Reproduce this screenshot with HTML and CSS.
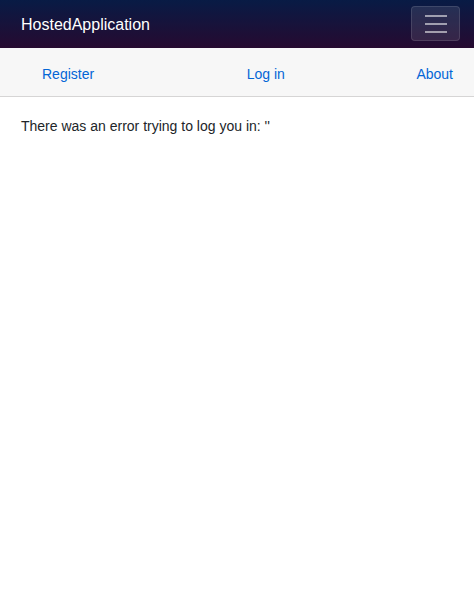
FILE: index.html
```html
<!DOCTYPE html>
<html lang="en">

<head>
    <meta charset="UTF-8">
    <meta name="viewport" content="width=device-width, initial-scale=1.0">
    <title>HostedApplication</title>
    <link rel="stylesheet" href="styles.css">
</head>

<body>
    <div class="top-bar">
        <a class="brand" href="#">HostedApplication</a>
        <button class="toggler" type="button" aria-label="Toggle navigation">
            <span class="bar"></span>
            <span class="bar"></span>
            <span class="bar"></span>
        </button>
    </div>
    <div class="top-row">
        <a class="nav-link" href="#">Register</a>
        <a class="nav-link login" href="#">Log in</a>
        <a class="nav-link" href="#">About</a>
    </div>
    <div class="content">
        There was an error trying to log you in: ''
    </div>
</body>

</html>
```
FILE: styles.css
```css
body {
    margin: 0px;
    background-color: #ffffff;
}

* {
    font-family: 'Helvetica Neue', 'Liberation Sans', Arial, sans-serif;
}

.top-bar {
    height: 48px;
    padding: 0 14px 0 21px;
    box-sizing: border-box;
    display: flex;
    align-items: center;
    justify-content: space-between;
    background-image: linear-gradient(180deg, #081b45 0%, #260a30 100%);
}

.brand {
    color: #ffffff;
    font-size: 16px;
    line-height: 20px;
    margin-top: 1px;
    text-decoration: none;
}

.toggler {
    width: 49px;
    height: 35px;
    margin-top: -1px;
    padding: 0;
    border: 1px solid rgba(255, 255, 255, 0.12);
    border-radius: 4px;
    background-color: rgba(255, 255, 255, 0.1);
    display: flex;
    flex-direction: column;
    align-items: center;
    justify-content: center;
    gap: 6px;
}

.bar {
    display: block;
    width: 22px;
    height: 2px;
    background-color: rgba(255, 255, 255, 0.55);
}

.top-row {
    height: 49px;
    padding: 3px 21px 0 42px;
    box-sizing: border-box;
    display: flex;
    align-items: center;
    justify-content: space-between;
    background-color: #f7f7f7;
    border-bottom: 1px solid #d6d5d5;
}

.nav-link {
    color: #0366d6;
    font-size: 14px;
    line-height: 18px;
    text-decoration: none;
}

.login {
    margin-left: 21px;
}

.content {
    padding: 20px 21px;
    font-size: 14px;
    line-height: 18px;
    color: #212529;
}
```
